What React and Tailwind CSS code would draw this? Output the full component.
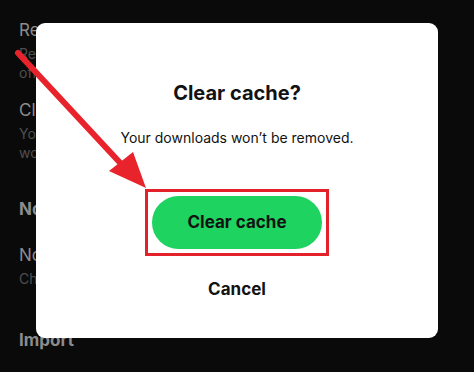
import React from 'react'

const ROWS = [
  { title: 'Remove all downloads', sub: ['Remove all', 'offline.'] },
  { title: 'Clear cache', sub: ['Your cache', 'won\u2019t go.'] },
]

export default function App() {
  return (
    <div className="relative w-[474px] h-[372px] overflow-hidden bg-[#0a0a0a] font-['Inter',sans-serif]">
      {/* settings list behind the dialog */}
      <div className="flex flex-col pl-[19px] pt-[19px]">
        {ROWS.map(r => (
          <div key={r.title} className="mb-[17px]">
            <p className="text-[17px] leading-[22px] text-[#8c8c8c]">{r.title}</p>
            <div className="mt-[3px]">
              {r.sub.map(s => (
                <p key={s} className="text-[14px] leading-[19px] text-[#4f4f4f]">{s}</p>
              ))}
            </div>
          </div>
        ))}
        <p className="mt-[19px] text-[17px] leading-[22px] font-bold text-[#8c8c8c]">Notifications</p>
        <p className="mt-[24px] text-[17px] leading-[22px] text-[#8c8c8c]">Notifications</p>
        <p className="mt-[3px] text-[14px] leading-[19px] text-[#4f4f4f]">Choose alerts</p>
        <p className="mt-[41px] text-[17px] leading-[22px] font-bold text-[#8c8c8c]">Import</p>
      </div>

      {/* dialog */}
      <div className="absolute left-[36px] top-[23px] w-[402px] h-[315px] rounded-[9px] bg-white flex flex-col items-center pt-[56px]">
        <h2 className="text-[20px] leading-[28px] font-bold text-[#121212]">Clear cache?</h2>
        <p className="mt-[21px] text-[14px] leading-[20px] text-[#121212]">Your downloads won&rsquo;t be removed.</p>
        <div className="mt-[41px] border-[3px] border-[#e2212b] p-[4px]">
          <button className="w-[170px] h-[53px] rounded-full bg-[#1ed35f] text-[17px] font-bold text-[#121212]">
            Clear cache
          </button>
        </div>
        <button className="mt-[21px] text-[17px] leading-[24px] font-bold text-[#121212]">Cancel</button>
      </div>

      {/* annotation arrow */}
      <svg className="absolute left-0 top-0" width="474" height="372" viewBox="0 0 474 372">
        <line x1="18" y1="53" x2="124" y2="167" stroke="#e8232b" strokeWidth="6" strokeLinecap="round" />
        <polygon points="146,188 109,171 133,152" fill="#e8232b" />
      </svg>
    </div>
  )
}
